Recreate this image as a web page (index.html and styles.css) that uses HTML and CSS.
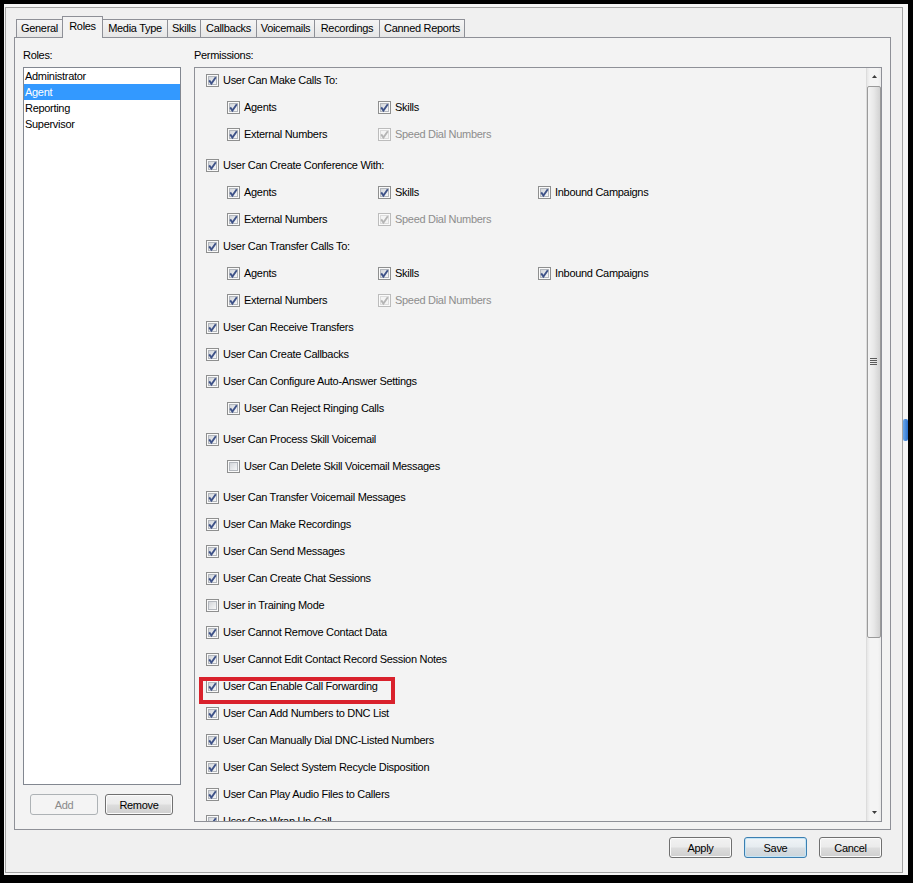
FILE: index.html
```html
<!DOCTYPE html>
<html>
<head>
<meta charset="utf-8">
<title>Roles</title>
<link rel="stylesheet" href="styles.css">
</head>
<body>
<div class="frame">
  <div class="window">
    <div class="tabs">
      <div class="tab t1">General</div>
      <div class="tab t2 sel">Roles</div>
      <div class="tab t3">Media Type</div>
      <div class="tab t4">Skills</div>
      <div class="tab t5">Callbacks</div>
      <div class="tab t6">Voicemails</div>
      <div class="tab t7">Recordings</div>
      <div class="tab t8">Canned Reports</div>
    </div>
    <div class="panel">
      <div class="col-left">
        <div class="label">Roles:</div>
        <div class="listbox">
          <div class="item">Administrator</div>
          <div class="item sel">Agent</div>
          <div class="item">Reporting</div>
          <div class="item">Supervisor</div>
        </div>
        <div class="list-buttons">
          <button class="btn disabled">Add</button>
          <button class="btn">Remove</button>
        </div>
      </div>
      <div class="col-right">
        <div class="label">Permissions:</div>
        <div class="permbox">
          <div class="perms">
            <div class="row"><span class="cb"><svg class="ck" viewBox="0 0 11 11"><path d="M2.2 5.4 4.4 8.5 8.8 2.3"/></svg></span><span class="t">User Can Make Calls To:</span></div>
            <div class="row sub">
              <div class="cell"><span class="cb"><svg class="ck" viewBox="0 0 11 11"><path d="M2.2 5.4 4.4 8.5 8.8 2.3"/></svg></span><span class="t">Agents</span></div>
              <div class="cell"><span class="cb"><svg class="ck" viewBox="0 0 11 11"><path d="M2.2 5.4 4.4 8.5 8.8 2.3"/></svg></span><span class="t">Skills</span></div>
            </div>
            <div class="row sub">
              <div class="cell"><span class="cb"><svg class="ck" viewBox="0 0 11 11"><path d="M2.2 5.4 4.4 8.5 8.8 2.3"/></svg></span><span class="t">External Numbers</span></div>
              <div class="cell dis"><span class="cb"><svg class="ck" viewBox="0 0 11 11"><path d="M2.2 5.4 4.4 8.5 8.8 2.3"/></svg></span><span class="t">Speed Dial Numbers</span></div>
            </div>
            <div class="row gap"><span class="cb"><svg class="ck" viewBox="0 0 11 11"><path d="M2.2 5.4 4.4 8.5 8.8 2.3"/></svg></span><span class="t">User Can Create Conference With:</span></div>
            <div class="row sub">
              <div class="cell"><span class="cb"><svg class="ck" viewBox="0 0 11 11"><path d="M2.2 5.4 4.4 8.5 8.8 2.3"/></svg></span><span class="t">Agents</span></div>
              <div class="cell"><span class="cb"><svg class="ck" viewBox="0 0 11 11"><path d="M2.2 5.4 4.4 8.5 8.8 2.3"/></svg></span><span class="t">Skills</span></div>
              <div class="cell"><span class="cb"><svg class="ck" viewBox="0 0 11 11"><path d="M2.2 5.4 4.4 8.5 8.8 2.3"/></svg></span><span class="t">Inbound Campaigns</span></div>
            </div>
            <div class="row sub">
              <div class="cell"><span class="cb"><svg class="ck" viewBox="0 0 11 11"><path d="M2.2 5.4 4.4 8.5 8.8 2.3"/></svg></span><span class="t">External Numbers</span></div>
              <div class="cell dis"><span class="cb"><svg class="ck" viewBox="0 0 11 11"><path d="M2.2 5.4 4.4 8.5 8.8 2.3"/></svg></span><span class="t">Speed Dial Numbers</span></div>
            </div>
            <div class="row"><span class="cb"><svg class="ck" viewBox="0 0 11 11"><path d="M2.2 5.4 4.4 8.5 8.8 2.3"/></svg></span><span class="t">User Can Transfer Calls To:</span></div>
            <div class="row sub">
              <div class="cell"><span class="cb"><svg class="ck" viewBox="0 0 11 11"><path d="M2.2 5.4 4.4 8.5 8.8 2.3"/></svg></span><span class="t">Agents</span></div>
              <div class="cell"><span class="cb"><svg class="ck" viewBox="0 0 11 11"><path d="M2.2 5.4 4.4 8.5 8.8 2.3"/></svg></span><span class="t">Skills</span></div>
              <div class="cell"><span class="cb"><svg class="ck" viewBox="0 0 11 11"><path d="M2.2 5.4 4.4 8.5 8.8 2.3"/></svg></span><span class="t">Inbound Campaigns</span></div>
            </div>
            <div class="row sub">
              <div class="cell"><span class="cb"><svg class="ck" viewBox="0 0 11 11"><path d="M2.2 5.4 4.4 8.5 8.8 2.3"/></svg></span><span class="t">External Numbers</span></div>
              <div class="cell dis"><span class="cb"><svg class="ck" viewBox="0 0 11 11"><path d="M2.2 5.4 4.4 8.5 8.8 2.3"/></svg></span><span class="t">Speed Dial Numbers</span></div>
            </div>
            <div class="row"><span class="cb"><svg class="ck" viewBox="0 0 11 11"><path d="M2.2 5.4 4.4 8.5 8.8 2.3"/></svg></span><span class="t">User Can Receive Transfers</span></div>
            <div class="row"><span class="cb"><svg class="ck" viewBox="0 0 11 11"><path d="M2.2 5.4 4.4 8.5 8.8 2.3"/></svg></span><span class="t">User Can Create Callbacks</span></div>
            <div class="row"><span class="cb"><svg class="ck" viewBox="0 0 11 11"><path d="M2.2 5.4 4.4 8.5 8.8 2.3"/></svg></span><span class="t">User Can Configure Auto-Answer Settings</span></div>
            <div class="row ind"><span class="cb"><svg class="ck" viewBox="0 0 11 11"><path d="M2.2 5.4 4.4 8.5 8.8 2.3"/></svg></span><span class="t">User Can Reject Ringing Calls</span></div>
            <div class="row gap"><span class="cb"><svg class="ck" viewBox="0 0 11 11"><path d="M2.2 5.4 4.4 8.5 8.8 2.3"/></svg></span><span class="t">User Can Process Skill Voicemail</span></div>
            <div class="row ind"><span class="cb"></span><span class="t">User Can Delete Skill Voicemail Messages</span></div>
            <div class="row gap"><span class="cb"><svg class="ck" viewBox="0 0 11 11"><path d="M2.2 5.4 4.4 8.5 8.8 2.3"/></svg></span><span class="t">User Can Transfer Voicemail Messages</span></div>
            <div class="row"><span class="cb"><svg class="ck" viewBox="0 0 11 11"><path d="M2.2 5.4 4.4 8.5 8.8 2.3"/></svg></span><span class="t">User Can Make Recordings</span></div>
            <div class="row"><span class="cb"><svg class="ck" viewBox="0 0 11 11"><path d="M2.2 5.4 4.4 8.5 8.8 2.3"/></svg></span><span class="t">User Can Send Messages</span></div>
            <div class="row"><span class="cb"><svg class="ck" viewBox="0 0 11 11"><path d="M2.2 5.4 4.4 8.5 8.8 2.3"/></svg></span><span class="t">User Can Create Chat Sessions</span></div>
            <div class="row"><span class="cb"></span><span class="t">User in Training Mode</span></div>
            <div class="row"><span class="cb"><svg class="ck" viewBox="0 0 11 11"><path d="M2.2 5.4 4.4 8.5 8.8 2.3"/></svg></span><span class="t">User Cannot Remove Contact Data</span></div>
            <div class="row"><span class="cb"><svg class="ck" viewBox="0 0 11 11"><path d="M2.2 5.4 4.4 8.5 8.8 2.3"/></svg></span><span class="t">User Cannot Edit Contact Record Session Notes</span></div>
            <div class="row marked"><span class="cb"><svg class="ck" viewBox="0 0 11 11"><path d="M2.2 5.4 4.4 8.5 8.8 2.3"/></svg></span><span class="t">User Can Enable Call Forwarding</span><span class="redbox"></span></div>
            <div class="row"><span class="cb"><svg class="ck" viewBox="0 0 11 11"><path d="M2.2 5.4 4.4 8.5 8.8 2.3"/></svg></span><span class="t">User Can Add Numbers to DNC List</span></div>
            <div class="row"><span class="cb"><svg class="ck" viewBox="0 0 11 11"><path d="M2.2 5.4 4.4 8.5 8.8 2.3"/></svg></span><span class="t">User Can Manually Dial DNC-Listed Numbers</span></div>
            <div class="row"><span class="cb"><svg class="ck" viewBox="0 0 11 11"><path d="M2.2 5.4 4.4 8.5 8.8 2.3"/></svg></span><span class="t">User Can Select System Recycle Disposition</span></div>
            <div class="row"><span class="cb"><svg class="ck" viewBox="0 0 11 11"><path d="M2.2 5.4 4.4 8.5 8.8 2.3"/></svg></span><span class="t">User Can Play Audio Files to Callers</span></div>
            <div class="row"><span class="cb"><svg class="ck" viewBox="0 0 11 11"><path d="M2.2 5.4 4.4 8.5 8.8 2.3"/></svg></span><span class="t">User Can Wrap Up Call</span></div>
          </div>
          <div class="scrollbar">
            <div class="sb-btn"><svg width="5" height="3" viewBox="0 0 5 3"><polygon points="0,3 2.5,0 5,3" fill="#3c3c3c"/></svg></div>
            <div class="thumb"><svg width="8" height="8" viewBox="0 0 8 8"><path d="M0 0.5H7M0 2.5H7M0 4.5H7M0 6.5H7" stroke="#5a5a5a" stroke-width="1"/></svg></div>
            <div class="sb-btn down"><svg width="5" height="3" viewBox="0 0 5 3"><polygon points="0,0 5,0 2.5,3" fill="#3c3c3c"/></svg></div>
          </div>
        </div>
      </div>
    </div>
    <div class="footer">
      <button class="btn wide">Apply</button>
      <button class="btn wide default">Save</button>
      <button class="btn wide">Cancel</button>
    </div>
  </div>
  <div class="edge-marker"></div>
</div>
</body>
</html>
```

FILE: styles.css
```css
html, body {
  margin: 0;
  padding: 0;
}
body {
  width: 913px;
  height: 883px;
  background: #000;
  overflow: hidden;
  font-family: "Liberation Sans", Arial, sans-serif;
  font-size: 11px;
  letter-spacing: -0.3px;
  color: #000;
}
.frame {
  position: relative;
  box-sizing: border-box;
  margin: 4px 0 0 4px;
  width: 904px;
  height: 871px;
  padding: 3px 5px 2px 1px;
  background: #f6f6f6;
}
.window {
  box-sizing: border-box;
  width: 898px;
  height: 866px;
  border: 1px solid #a3a3a3;
  background: #f0f0f0;
  padding: 8px 11px 0 8px;
  display: flex;
  flex-direction: column;
}
.tabs {
  display: flex;
  align-items: flex-end;
  height: 21px;
  padding-left: 2px;
  position: relative;
  z-index: 1;
}
.tab {
  box-sizing: border-box;
  height: 18px;
  border: 1px solid #8e9097;
  border-bottom: 0;
  margin-right: -1px;
  background: linear-gradient(#f5f5f5, #e6e6e6);
  text-align: center;
  line-height: 17px;
  white-space: nowrap;
}
.tab.sel {
  height: 22px;
  margin-bottom: -1px;
  background: #f3f3f3;
  line-height: 19px;
  position: relative;
  z-index: 2;
}
.t1 { width: 47px; }
.t2 { width: 41px; }
.t3 { width: 66px; }
.t4 { width: 34px; }
.t5 { width: 57px; }
.t6 { width: 59px; }
.t7 { width: 66px; }
.t8 { width: 86px; }

.panel {
  box-sizing: border-box;
  height: 793px;
  border: 1px solid #8e9097;
  background: #f3f3f3;
  padding: 0 8px 7px 8px;
  display: flex;
  gap: 13px;
}
.col-left {
  width: 158px;
  display: flex;
  flex-direction: column;
}
.col-right {
  width: 688px;
  display: flex;
  flex-direction: column;
}
.label {
  padding-top: 10px;
  line-height: 15px;
  height: 15px;
  margin-bottom: 4px;
}
.listbox {
  flex: 1;
  border: 1px solid #828790;
  background: #fff;
}
.item {
  height: 16px;
  line-height: 16px;
  padding-left: 1px;
}
.item.sel {
  background: #3399ff;
  color: #fff;
}
.list-buttons {
  display: flex;
  gap: 7px;
  padding-left: 7px;
  margin-top: 9px;
  margin-bottom: 7px;
}
.btn {
  box-sizing: border-box;
  width: 68px;
  height: 21px;
  padding: 0;
  border: 1px solid #707070;
  border-radius: 3px;
  background: linear-gradient(#f2f2f2 0%, #ebebeb 48%, #dddddd 52%, #cfcfcf 100%);
  box-shadow: inset 0 0 0 1px #fbfbfb;
  font: inherit;
  letter-spacing: inherit;
  color: #000;
  text-align: center;
}
.btn.disabled {
  border-color: #adb2b5;
  background: #f4f4f4;
  box-shadow: none;
  color: #8a8a8a;
}
.btn.default {
  border-color: #3c7fb1;
  box-shadow: inset 0 0 0 1px #c4e5f6;
  background: linear-gradient(#f0f4f7 0%, #e6ecf0 48%, #d8dee3 52%, #cdd5da 100%);
}
.btn.wide {
  width: 63px;
}

.permbox {
  flex: 1;
  border: 1px solid #8e9097;
  background: #f3f3f3;
  display: flex;
  overflow: hidden;
}
.perms {
  flex: 1;
  padding-top: 4px;
  overflow: hidden;
}
.row {
  position: relative;
  height: 27px;
  display: flex;
  align-items: flex-start;
  padding-left: 11px;
}
.row.gap {
  margin-top: 4px;
}
.row.ind {
  padding-left: 32px;
}
.row.sub {
  display: grid;
  grid-template-columns: 151px 160px auto;
  padding-left: 32px;
}
.cell {
  display: flex;
  align-items: flex-start;
}
.t {
  line-height: 16px;
  white-space: nowrap;
}
.cb {
  position: relative;
  flex: none;
  box-sizing: border-box;
  width: 13px;
  height: 13px;
  margin: 2px 4px 0 0;
  border: 1px solid #8e8f8f;
  background: #fafafa;
}
.cb::before {
  content: "";
  position: absolute;
  left: 1px;
  top: 1px;
  width: 9px;
  height: 9px;
  box-sizing: border-box;
  border: 1px solid #b3b7bd;
  background: linear-gradient(135deg, #d3d6da, #f6f7f8);
}
.ck {
  position: absolute;
  left: 0;
  top: 0;
  width: 11px;
  height: 11px;
}
.ck path {
  fill: none;
  stroke: #3e5288;
  stroke-width: 1.9;
}
.dis {
  color: #8d8d8d;
}
.dis .cb {
  border-color: #bcbcbc;
}
.dis .cb::before {
  border-color: #dcdcdc;
  background: #f4f4f4;
}
.dis .ck path {
  stroke: #b5b5b5;
}
.redbox {
  position: absolute;
  left: 4px;
  top: -1px;
  width: 196px;
  height: 27px;
  box-sizing: border-box;
  border: 4px solid #d9212c;
}

.scrollbar {
  width: 15px;
  box-sizing: border-box;
  border-left: 1px solid #dcdcdc;
  background: linear-gradient(to right, #e6e6e6, #f4f4f4 3px, #f4f4f4 11px, #eaeaea);
  display: flex;
  flex-direction: column;
}
.sb-btn {
  height: 17px;
  display: flex;
  align-items: center;
  justify-content: center;
  flex: none;
}
.sb-btn.down {
  margin-top: auto;
}
.thumb {
  flex: none;
  margin-top: 1px;
  height: 552px;
  box-sizing: border-box;
  border: 1px solid #9a9a9a;
  border-radius: 2px;
  background: linear-gradient(to right, #f4f4f4, #e8e8e8 50%, #d2d2d2);
  display: flex;
  align-items: center;
  justify-content: center;
}

.footer {
  display: flex;
  justify-content: flex-end;
  gap: 12px;
  margin-top: 7px;
  padding-right: 9px;
}
.edge-marker {
  position: absolute;
  left: 899px;
  top: 415px;
  width: 5px;
  height: 22px;
  border-radius: 2px;
  background: linear-gradient(to right, #6aa7e8, #2e74cf);
}
```
